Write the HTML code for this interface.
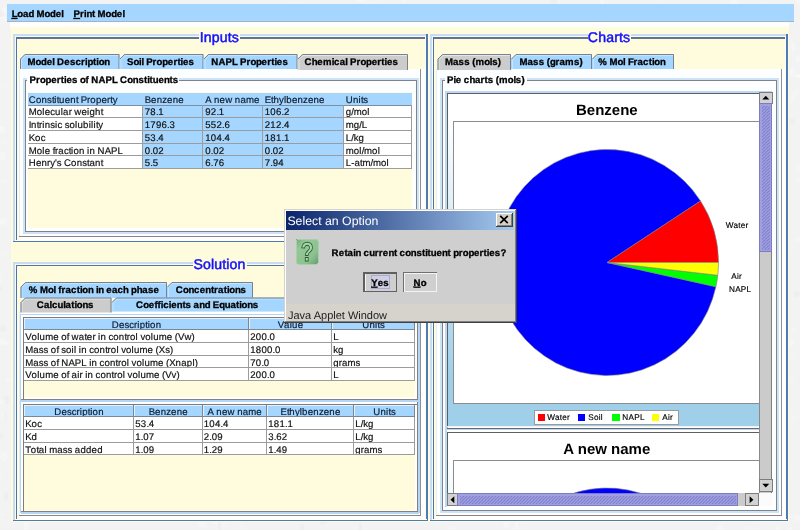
<!DOCTYPE html>
<html lang="en">
<head>
<meta charset="utf-8">
<title>NAPL Model Applet</title>
<style>
html,body{margin:0;padding:0;background:#f3f3f3;}
body{width:800px;height:530px;overflow:hidden;}
svg{display:block;will-change:transform;font-family:"Liberation Sans",Arial,sans-serif;}
svg rect, svg line{shape-rendering:crispEdges;}
svg text{text-rendering:geometricPrecision;}
</style>
</head>
<body>
<svg width="800" height="530" viewBox="0 0 800 530">
<rect x="0" y="0" width="800" height="530" fill="#f3f3f3" />
<ellipse cx="296.0" cy="1.4" rx="3.8" ry="3.1" fill="#fafafa" opacity="0.3"/>
<ellipse cx="376.2" cy="1.4" rx="2.1" ry="2.0" fill="#fafafa" opacity="0.3"/>
<ellipse cx="3.1" cy="401.9" rx="3.0" ry="2.6" fill="#ffffff" opacity="0.3"/>
<ellipse cx="792.7" cy="378.5" rx="3.8" ry="2.9" fill="#fafafa" opacity="0.3"/>
<ellipse cx="3.6" cy="19.0" rx="2.7" ry="2.4" fill="#fafafa" opacity="0.3"/>
<ellipse cx="240.8" cy="526.6" rx="3.0" ry="4.7" fill="#fafafa" opacity="0.3"/>
<ellipse cx="223.7" cy="523.3" rx="3.9" ry="4.7" fill="#fafafa" opacity="0.3"/>
<ellipse cx="506.4" cy="523.0" rx="3.6" ry="5.0" fill="#ffffff" opacity="0.3"/>
<ellipse cx="2.8" cy="155.8" rx="3.4" ry="4.6" fill="#ffffff" opacity="0.3"/>
<ellipse cx="302.2" cy="529.0" rx="2.8" ry="5.0" fill="#e9e9e9" opacity="0.3"/>
<ellipse cx="0.1" cy="514.9" rx="2.2" ry="2.4" fill="#fafafa" opacity="0.3"/>
<ellipse cx="0.3" cy="475.2" rx="2.4" ry="3.1" fill="#fafafa" opacity="0.3"/>
<ellipse cx="3.1" cy="328.7" rx="3.9" ry="3.3" fill="#e9e9e9" opacity="0.3"/>
<ellipse cx="797.2" cy="518.2" rx="2.8" ry="3.4" fill="#ffffff" opacity="0.3"/>
<ellipse cx="799.9" cy="326.4" rx="3.1" ry="1.7" fill="#fafafa" opacity="0.3"/>
<ellipse cx="733.9" cy="2.1" rx="3.0" ry="4.8" fill="#ffffff" opacity="0.3"/>
<ellipse cx="365.0" cy="1.8" rx="2.3" ry="2.8" fill="#fafafa" opacity="0.3"/>
<ellipse cx="2.1" cy="514.8" rx="3.2" ry="2.0" fill="#fafafa" opacity="0.3"/>
<ellipse cx="1.8" cy="359.4" rx="3.1" ry="1.8" fill="#fafafa" opacity="0.3"/>
<ellipse cx="793.3" cy="429.2" rx="3.9" ry="1.8" fill="#fafafa" opacity="0.3"/>
<ellipse cx="5.2" cy="417.1" rx="1.6" ry="4.9" fill="#e9e9e9" opacity="0.3"/>
<ellipse cx="798.4" cy="180.3" rx="3.6" ry="1.8" fill="#fafafa" opacity="0.3"/>
<ellipse cx="791.3" cy="246.3" rx="3.1" ry="2.5" fill="#fafafa" opacity="0.3"/>
<ellipse cx="3.3" cy="253.0" rx="3.6" ry="3.7" fill="#fafafa" opacity="0.3"/>
<ellipse cx="3.5" cy="17.1" rx="2.6" ry="4.1" fill="#fafafa" opacity="0.3"/>
<ellipse cx="4.2" cy="456.6" rx="3.6" ry="4.9" fill="#ffffff" opacity="0.3"/>
<ellipse cx="722.9" cy="523.6" rx="2.9" ry="1.5" fill="#fafafa" opacity="0.3"/>
<ellipse cx="1.0" cy="278.2" rx="2.5" ry="4.8" fill="#fafafa" opacity="0.3"/>
<ellipse cx="777.6" cy="528.3" rx="2.1" ry="1.9" fill="#ffffff" opacity="0.3"/>
<ellipse cx="1.4" cy="436.5" rx="1.5" ry="3.7" fill="#e9e9e9" opacity="0.3"/>
<ellipse cx="214.9" cy="522.4" rx="3.4" ry="1.5" fill="#ffffff" opacity="0.3"/>
<ellipse cx="790.5" cy="516.6" rx="3.6" ry="1.8" fill="#fafafa" opacity="0.3"/>
<ellipse cx="791.6" cy="342.9" rx="3.0" ry="2.8" fill="#ffffff" opacity="0.3"/>
<ellipse cx="7.9" cy="379.5" rx="2.5" ry="1.8" fill="#ffffff" opacity="0.3"/>
<ellipse cx="520.2" cy="528.4" rx="1.6" ry="3.7" fill="#fafafa" opacity="0.3"/>
<ellipse cx="2.5" cy="129.9" rx="2.8" ry="3.9" fill="#ffffff" opacity="0.3"/>
<ellipse cx="6.4" cy="496.3" rx="2.4" ry="4.6" fill="#e9e9e9" opacity="0.3"/>
<ellipse cx="751.2" cy="529.1" rx="3.2" ry="4.1" fill="#fafafa" opacity="0.3"/>
<ellipse cx="798.1" cy="76.1" rx="3.4" ry="1.7" fill="#ffffff" opacity="0.3"/>
<ellipse cx="4.5" cy="181.0" rx="3.6" ry="1.6" fill="#ffffff" opacity="0.3"/>
<ellipse cx="761.9" cy="0.9" rx="1.8" ry="4.1" fill="#fafafa" opacity="0.3"/>
<ellipse cx="0.5" cy="128.3" rx="1.9" ry="2.4" fill="#fafafa" opacity="0.3"/>
<ellipse cx="202.3" cy="524.8" rx="3.9" ry="2.8" fill="#ffffff" opacity="0.3"/>
<ellipse cx="7.8" cy="220.1" rx="2.9" ry="3.5" fill="#fafafa" opacity="0.3"/>
<ellipse cx="5.5" cy="86.2" rx="2.7" ry="3.2" fill="#fafafa" opacity="0.3"/>
<ellipse cx="4.1" cy="72.2" rx="3.4" ry="2.0" fill="#fafafa" opacity="0.3"/>
<ellipse cx="792.3" cy="355.8" rx="3.6" ry="3.6" fill="#fafafa" opacity="0.3"/>
<ellipse cx="4.7" cy="142.1" rx="3.5" ry="2.2" fill="#fafafa" opacity="0.3"/>
<ellipse cx="2.9" cy="221.8" rx="3.2" ry="4.0" fill="#ffffff" opacity="0.3"/>
<ellipse cx="657.3" cy="0.1" rx="3.6" ry="2.9" fill="#fafafa" opacity="0.3"/>
<ellipse cx="7.1" cy="343.6" rx="3.4" ry="1.7" fill="#ffffff" opacity="0.3"/>
<ellipse cx="792.4" cy="72.9" rx="3.1" ry="3.9" fill="#ffffff" opacity="0.3"/>
<ellipse cx="792.6" cy="97.1" rx="1.7" ry="4.3" fill="#ffffff" opacity="0.3"/>
<ellipse cx="798.3" cy="239.7" rx="3.3" ry="2.7" fill="#ffffff" opacity="0.3"/>
<ellipse cx="2.7" cy="341.5" rx="3.4" ry="3.2" fill="#ffffff" opacity="0.3"/>
<ellipse cx="219.8" cy="525.5" rx="1.7" ry="4.8" fill="#e9e9e9" opacity="0.3"/>
<ellipse cx="360.3" cy="527.2" rx="1.8" ry="4.8" fill="#e9e9e9" opacity="0.3"/>
<ellipse cx="795.4" cy="269.6" rx="1.6" ry="2.5" fill="#fafafa" opacity="0.3"/>
<ellipse cx="516.5" cy="525.0" rx="1.8" ry="4.8" fill="#ffffff" opacity="0.3"/>
<ellipse cx="796.4" cy="294.1" rx="3.1" ry="3.1" fill="#e9e9e9" opacity="0.3"/>
<ellipse cx="6.3" cy="399.9" rx="2.9" ry="4.1" fill="#e9e9e9" opacity="0.3"/>
<ellipse cx="0.8" cy="22.3" rx="2.8" ry="2.4" fill="#fafafa" opacity="0.3"/>
<ellipse cx="322.7" cy="522.6" rx="3.6" ry="1.9" fill="#e9e9e9" opacity="0.3"/>
<ellipse cx="451.5" cy="527.6" rx="3.2" ry="2.9" fill="#fafafa" opacity="0.3"/>
<ellipse cx="1.0" cy="288.7" rx="1.9" ry="2.1" fill="#e9e9e9" opacity="0.3"/>
<ellipse cx="792.9" cy="472.3" rx="3.9" ry="2.8" fill="#fafafa" opacity="0.3"/>
<ellipse cx="398.3" cy="524.4" rx="1.6" ry="2.2" fill="#fafafa" opacity="0.3"/>
<ellipse cx="797.7" cy="91.7" rx="3.1" ry="2.2" fill="#fafafa" opacity="0.3"/>
<ellipse cx="798.1" cy="59.1" rx="2.2" ry="3.8" fill="#ffffff" opacity="0.3"/>
<ellipse cx="1.1" cy="13.5" rx="3.0" ry="3.3" fill="#e9e9e9" opacity="0.3"/>
<ellipse cx="799.3" cy="368.2" rx="1.8" ry="4.5" fill="#fafafa" opacity="0.3"/>
<ellipse cx="790.3" cy="528.9" rx="2.0" ry="1.7" fill="#ffffff" opacity="0.3"/>
<ellipse cx="3.5" cy="417.1" rx="2.5" ry="4.5" fill="#fafafa" opacity="0.3"/>
<ellipse cx="559.4" cy="523.7" rx="2.3" ry="3.1" fill="#fafafa" opacity="0.3"/>
<ellipse cx="719.5" cy="528.8" rx="2.8" ry="3.6" fill="#ffffff" opacity="0.3"/>
<ellipse cx="798.0" cy="76.0" rx="2.6" ry="2.2" fill="#ffffff" opacity="0.3"/>
<ellipse cx="402.9" cy="0.1" rx="2.6" ry="2.1" fill="#ffffff" opacity="0.3"/>
<ellipse cx="26.3" cy="525.2" rx="2.7" ry="4.7" fill="#ffffff" opacity="0.3"/>
<ellipse cx="793.9" cy="329.9" rx="2.4" ry="1.9" fill="#ffffff" opacity="0.3"/>
<ellipse cx="792.9" cy="418.3" rx="3.9" ry="3.2" fill="#fafafa" opacity="0.3"/>
<ellipse cx="798.1" cy="168.0" rx="1.6" ry="3.0" fill="#ffffff" opacity="0.3"/>
<ellipse cx="4.7" cy="10.1" rx="2.8" ry="3.2" fill="#ffffff" opacity="0.3"/>
<ellipse cx="799.0" cy="180.2" rx="2.7" ry="2.7" fill="#fafafa" opacity="0.3"/>
<ellipse cx="793.0" cy="46.5" rx="2.2" ry="4.5" fill="#ffffff" opacity="0.3"/>
<ellipse cx="795.5" cy="92.6" rx="3.3" ry="4.1" fill="#fafafa" opacity="0.3"/>
<ellipse cx="791.8" cy="121.6" rx="3.4" ry="3.2" fill="#e9e9e9" opacity="0.3"/>
<ellipse cx="602.2" cy="2.1" rx="1.9" ry="4.0" fill="#ffffff" opacity="0.3"/>
<ellipse cx="553.5" cy="0.3" rx="3.7" ry="4.6" fill="#e9e9e9" opacity="0.3"/>
<ellipse cx="798.7" cy="0.9" rx="2.0" ry="4.3" fill="#ffffff" opacity="0.3"/>
<ellipse cx="360.3" cy="0.6" rx="3.8" ry="2.0" fill="#ffffff" opacity="0.3"/>
<rect x="7" y="4" width="787" height="18.3" fill="#a4d6ff" />
<rect x="7" y="21.3" width="787" height="1" fill="#a3b5c3" />
<text x="11.70 17.30 22.90 28.50 34.10 36.50 44.50 50.10 55.70 61.30" y="17" font-size="9.60" font-weight="bold" fill="#000"  stroke="#000" stroke-width="0.3"><tspan text-decoration="underline">L</tspan>oad Model</text>
<text x="73.60 80.00 84.00 86.40 92.00 95.20 97.60 105.60 111.20 116.80 122.40" y="17" font-size="9.60" font-weight="bold" fill="#000"  stroke="#000" stroke-width="0.3"><tspan text-decoration="underline">P</tspan>rint Model</text>
<defs><linearGradient id="cg" x1="0" y1="0" x2="0" y2="1"><stop offset="0" stop-color="#ffffff"/><stop offset="1" stop-color="#fffbdd"/></linearGradient>
<linearGradient id="tg" x1="0" y1="0" x2="1" y2="0"><stop offset="0" stop-color="#0a246a"/><stop offset="1" stop-color="#a6caf0"/></linearGradient>
<linearGradient id="ig" x1="0" y1="0" x2="1" y2="1"><stop offset="0" stop-color="#6fa878"/><stop offset="0.25" stop-color="#93c896"/><stop offset="0.7" stop-color="#8cc290"/><stop offset="1" stop-color="#5f9a70"/></linearGradient>
<pattern id="hatch" width="3.2" height="3.2" patternUnits="userSpaceOnUse"><rect width="3.2" height="3.2" fill="#a6a6e6"/><path d="M-0.8,0.8 L0.8,-0.8 M0,3.2 L3.2,0 M2.4,4 L4,2.4" stroke="#7a7ac8" stroke-width="1.0"/></pattern>
<clipPath id="clip1"><rect x="447" y="93" width="312" height="334.5"/></clipPath>
<clipPath id="clip2"><rect x="447" y="431" width="312" height="62"/></clipPath>
<linearGradient id="chg" x1="0" y1="0" x2="0" y2="1"><stop offset="0" stop-color="#ffffff"/><stop offset="0.08" stop-color="#ffffff"/><stop offset="0.85" stop-color="#9fcfe9"/><stop offset="1" stop-color="#9fcfe9"/></linearGradient>
</defs>
<rect x="10.6" y="22" width="778.6" height="500.3" fill="#fffbdd" />
<rect x="10" y="22" width="779" height="3.5" fill="#ffffff" />
<rect x="10" y="25.5" width="779" height="3" fill="url(#cg)" />
<rect x="13" y="34" width="414.5" height="2" fill="#c8dcf4" />
<rect x="15" y="36" width="411.5" height="1" fill="#f4faff" />
<rect x="16" y="37" width="409.5" height="1.7" fill="#61738e" />
<rect x="13" y="34" width="2" height="208.4" fill="#c8dcf4" />
<rect x="15" y="36" width="1" height="205.4" fill="#f4faff" />
<rect x="15.8" y="37" width="1.5" height="203.4" fill="#4f72a6" />
<rect x="424.7" y="36" width="1.2" height="205.4" fill="#fafdff" />
<rect x="425.9" y="34" width="1.6" height="208.4" fill="#4f7bb0" />
<rect x="15" y="239.6" width="411.5" height="1.2" fill="#fafdff" />
<rect x="13" y="240.8" width="414.5" height="1.6" fill="#4f7bb0" />
<rect x="198.5" y="32" width="41.5" height="9" fill="#fffbdd" />
<text x="199.70 203.70 211.70 219.70 227.70 231.70" y="41.9" font-size="14.08" font-weight="normal" fill="#1212ff" stroke="#1212ff" stroke-width="0.5">Inputs</text>
<rect x="430" y="34" width="357.5" height="2" fill="#c8dcf4" />
<rect x="432" y="36" width="354.5" height="1" fill="#f4faff" />
<rect x="433" y="37" width="352.5" height="1.7" fill="#61738e" />
<rect x="430" y="34" width="2" height="487.4" fill="#c8dcf4" />
<rect x="432" y="36" width="1" height="484.4" fill="#f4faff" />
<rect x="432.8" y="37" width="1.5" height="482.4" fill="#4f72a6" />
<rect x="784.7" y="36" width="1.2" height="484.4" fill="#fafdff" />
<rect x="785.9" y="34" width="1.6" height="487.4" fill="#4f7bb0" />
<rect x="432" y="518.6" width="354.5" height="1.2" fill="#fafdff" />
<rect x="430" y="519.8" width="357.5" height="1.6" fill="#4f7bb0" />
<rect x="587.5" y="32" width="43.5" height="9" fill="#fffbdd" />
<text x="587.80 598.20 606.20 614.20 619.00 623.00" y="41.9" font-size="14.08" font-weight="normal" fill="#1212ff" stroke="#1212ff" stroke-width="0.5">Charts</text>
<rect x="13" y="261.5" width="414.5" height="2" fill="#c8dcf4" />
<rect x="15" y="263.5" width="411.5" height="1" fill="#f4faff" />
<rect x="16" y="264.5" width="409.5" height="1.7" fill="#61738e" />
<rect x="13" y="261.5" width="2" height="259.9" fill="#c8dcf4" />
<rect x="15" y="263.5" width="1" height="256.9" fill="#f4faff" />
<rect x="15.8" y="264.5" width="1.5" height="254.89999999999998" fill="#4f72a6" />
<rect x="424.7" y="263.5" width="1.2" height="256.9" fill="#fafdff" />
<rect x="425.9" y="261.5" width="1.6" height="259.9" fill="#4f7bb0" />
<rect x="15" y="518.6" width="411.5" height="1.2" fill="#fafdff" />
<rect x="13" y="519.8" width="414.5" height="1.6" fill="#4f7bb0" />
<rect x="192.5" y="259.5" width="54.0" height="9" fill="#fffbdd" />
<text x="193.40 203.00 211.00 214.20 222.20 226.20 229.40 237.40" y="269.3" font-size="14.08" font-weight="normal" fill="#1212ff" stroke="#1212ff" stroke-width="0.5">Solution</text>
<rect x="19" y="69" width="405.7" height="171.8" fill="#ffffff" />
<rect x="19" y="69" width="402" height="168" fill="#fdfeff" />
<rect x="19" y="69" width="402" height="1" fill="#ffffff" />
<rect x="19" y="69" width="1" height="168" fill="#e6eef8" />
<rect x="420" y="69" width="1" height="168" fill="#8b8f96" />
<rect x="19" y="236" width="402" height="1" fill="#8b8680" />
<polygon points="20,69 20,59 25,54 119.5,54 119.5,69" fill="#a4d6ff"/>
<polyline points="21.5,69 21.5,59.5 25.5,55.5 118.5,55.5" fill="none" stroke="#c6e4ff" stroke-width="1"/>
<polyline points="20.5,69 20.5,59 25,54.5 119.0,54.5 119.0,69" fill="none" stroke="#76828f" stroke-width="1"/>
<text x="27.50 35.50 41.10 46.70 52.30 54.70 57.10 64.30 69.90 75.50 81.10 85.10 87.50 93.10 96.30 98.70 104.30" y="64.9" font-size="9.60" font-weight="bold" fill="#000"  stroke="#000" stroke-width="0.3">Model Description</text>
<polygon points="119.5,69 119.5,59 124.5,54 203.5,54 203.5,69" fill="#a4d6ff"/>
<polyline points="121.0,69 121.0,59.5 125.0,55.5 202.5,55.5" fill="none" stroke="#c6e4ff" stroke-width="1"/>
<polyline points="120.0,59 124.5,54.5 203.0,54.5 203.0,69" fill="none" stroke="#76828f" stroke-width="1"/>
<text x="127.00 133.40 139.00 141.40 143.80 146.20 152.60 156.60 162.20 167.80 173.40 177.40 180.60 183.00 188.60" y="64.9" font-size="9.60" font-weight="bold" fill="#000"  stroke="#000" stroke-width="0.3">Soil Properties</text>
<polygon points="203.5,69 203.5,59 208.5,54 297.5,54 297.5,69" fill="#a4d6ff"/>
<polyline points="205.0,69 205.0,59.5 209.0,55.5 296.5,55.5" fill="none" stroke="#c6e4ff" stroke-width="1"/>
<polyline points="204.0,59 208.5,54.5 297.0,54.5 297.0,69" fill="none" stroke="#76828f" stroke-width="1"/>
<text x="211.20 218.40 225.60 232.00 237.60 240.00 246.40 250.40 256.00 261.60 267.20 271.20 274.40 276.80 282.40" y="64.9" font-size="9.60" font-weight="bold" fill="#000"  stroke="#000" stroke-width="0.3">NAPL Properties</text>
<polygon points="297.5,70 297.5,59 302.5,54 408,54 408,70" fill="#cccccc"/>
<polyline points="299.0,70 299.0,59.5 303.0,55.5 407,55.5" fill="none" stroke="#e6e6e6" stroke-width="1"/>
<polyline points="298.0,59 302.5,54.5 407.5,54.5 407.5,70" fill="none" stroke="#76828f" stroke-width="1"/>
<text x="304.50 311.70 317.30 322.90 331.70 334.10 339.70 345.30 347.70 350.10 356.50 360.50 366.10 371.70 377.30 381.30 384.50 386.90 392.50" y="64.9" font-size="9.60" font-weight="bold" fill="#000"  stroke="#000" stroke-width="0.3">Chemical Properties</text>
<rect x="436" y="69" width="349.90000000000003" height="450.8" fill="#ffffff" />
<rect x="436" y="69" width="345.6" height="447" fill="#fdfeff" />
<rect x="436" y="69" width="345.6" height="1" fill="#ffffff" />
<rect x="436" y="69" width="1" height="447" fill="#e6eef8" />
<rect x="780.6" y="69" width="1" height="447" fill="#8b8f96" />
<rect x="436" y="515" width="345.6" height="1" fill="#8b8680" />
<polygon points="437.5,70 437.5,59 442.5,54 511,54 511,70" fill="#cccccc"/>
<polyline points="439.0,70 439.0,59.5 443.0,55.5 510,55.5" fill="none" stroke="#e6e6e6" stroke-width="1"/>
<polyline points="438.0,70 438.0,59 442.5,54.5 510.5,54.5 510.5,70" fill="none" stroke="#76828f" stroke-width="1"/>
<text x="445.00 453.00 458.60 464.20 469.80 472.20 475.40 484.20 489.80 492.20 497.80" y="64.9" font-size="9.60" font-weight="bold" fill="#000"  stroke="#000" stroke-width="0.3">Mass (mols)</text>
<polygon points="511,69 511,59 516,54 592,54 592,69" fill="#a4d6ff"/>
<polyline points="512.5,69 512.5,59.5 516.5,55.5 591,55.5" fill="none" stroke="#c6e4ff" stroke-width="1"/>
<polyline points="511.5,59 516,54.5 591.5,54.5 591.5,69" fill="none" stroke="#76828f" stroke-width="1"/>
<text x="519.50 527.50 533.10 538.70 544.30 546.70 549.90 555.50 559.50 565.10 573.90 579.50" y="64.9" font-size="9.60" font-weight="bold" fill="#000"  stroke="#000" stroke-width="0.3">Mass (grams)</text>
<polygon points="592,69 592,59 597,54 674,54 674,69" fill="#a4d6ff"/>
<polyline points="593.5,69 593.5,59.5 597.5,55.5 673,55.5" fill="none" stroke="#c6e4ff" stroke-width="1"/>
<polyline points="592.5,59 597,54.5 673.5,54.5 673.5,69" fill="none" stroke="#76828f" stroke-width="1"/>
<text x="598.30 607.10 609.50 617.50 623.10 625.50 627.90 633.50 637.50 643.10 648.70 651.90 654.30 659.90" y="64.9" font-size="9.60" font-weight="bold" fill="#000"  stroke="#000" stroke-width="0.3">% Mol Fraction</text>
<rect x="19" y="311.5" width="405.7" height="208.3" fill="#ffffff" />
<rect x="19" y="311.5" width="402.3" height="204.5" fill="#fdfeff" />
<rect x="19" y="311.5" width="402.3" height="1" fill="#ffffff" />
<rect x="19" y="311.5" width="1" height="204.5" fill="#e6eef8" />
<rect x="420.3" y="311.5" width="1" height="204.5" fill="#8b8f96" />
<rect x="19" y="515" width="402.3" height="1" fill="#8b8680" />
<polygon points="20.5,298 20.5,287 25.5,282 167,282 167,298" fill="#a4d6ff"/>
<polyline points="22.0,298 22.0,287.5 26.0,283.5 166,283.5" fill="none" stroke="#c6e4ff" stroke-width="1"/>
<polyline points="21.0,298 21.0,287 25.5,282.5 166.5,282.5 166.5,298" fill="none" stroke="#76828f" stroke-width="1"/>
<text x="28.70 37.50 39.90 47.90 53.50 55.90 58.30 61.50 65.50 71.10 76.70 79.90 82.30 87.90 93.50 95.90 98.30 103.90 106.30 111.90 117.50 123.10 128.70 131.10 136.70 142.30 147.90 153.50" y="292.9" font-size="9.60" font-weight="bold" fill="#000"  stroke="#000" stroke-width="0.3">% Mol fraction in each phase</text>
<polygon points="167,298 167,287 172,282 253,282 253,298" fill="#a4d6ff"/>
<polyline points="168.5,298 168.5,287.5 172.5,283.5 252,283.5" fill="none" stroke="#c6e4ff" stroke-width="1"/>
<polyline points="167.5,287 172,282.5 252.5,282.5 252.5,298" fill="none" stroke="#76828f" stroke-width="1"/>
<text x="175.70 182.90 188.50 194.10 199.70 205.30 210.90 214.10 218.10 223.70 226.90 229.30 234.90 240.50" y="292.9" font-size="9.60" font-weight="bold" fill="#000"  stroke="#000" stroke-width="0.3">Concentrations</text>
<polygon points="111.5,311.5 111.5,302.5 116.5,297.5 300,297.5 300,311.5" fill="#a4d6ff"/>
<polyline points="113.0,311.5 113.0,303.0 117.0,299.0 299,299.0" fill="none" stroke="#c6e4ff" stroke-width="1"/>
<polyline points="112.0,302.5 116.5,298.0 299.5,298.0 299.5,311.5" fill="none" stroke="#76828f" stroke-width="1"/>
<text x="136.00 143.20 148.80 154.40 157.60 160.80 163.20 168.80 171.20 176.80 182.40 185.60 191.20 193.60 199.20 204.80 210.40 212.80 219.20 224.80 230.40 236.00 239.20 241.60 247.20 252.80" y="308.4" font-size="9.60" font-weight="bold" fill="#000"  stroke="#000" stroke-width="0.3">Coefficients and Equations</text>
<polygon points="20.5,312.5 20.5,302.5 25.5,297.5 111.5,297.5 111.5,312.5" fill="#cccccc"/>
<polyline points="22.0,312.5 22.0,303.0 26.0,299.0 110.5,299.0" fill="none" stroke="#e6e6e6" stroke-width="1"/>
<polyline points="21.0,312.5 21.0,302.5 25.5,298.0 111.0,298.0 111.0,312.5" fill="none" stroke="#76828f" stroke-width="1"/>
<text x="36.80 44.00 49.60 52.00 57.60 63.20 65.60 71.20 74.40 76.80 82.40 88.00" y="308.4" font-size="9.60" font-weight="bold" fill="#000"  stroke="#000" stroke-width="0.3">Calculations</text>
<rect x="24.0" y="79.0" width="393.5" height="154.0" fill="none" stroke="#cfe3f7" stroke-width="2"/>
<rect x="25.5" y="80.5" width="390.5" height="151.0" fill="none" stroke="#7d8389" stroke-width="1"/>
<rect x="27.1" y="76.5" width="151.9" height="8" fill="#fdfeff" />
<text x="29.60 36.00 40.00 45.60 51.20 56.80 60.80 64.00 66.40 72.00 77.60 80.00 85.60 88.80 91.20 98.40 105.60 112.00 117.60 120.00 127.20 132.80 138.40 144.00 147.20 149.60 152.80 158.40 164.00 169.60 172.80" y="82.9" font-size="9.60" font-weight="bold" fill="#000"  stroke="#000" stroke-width="0.3">Properties of NAPL Constituents</text>
<rect x="441.0" y="79.0" width="337.0" height="433.0" fill="none" stroke="#cfe3f7" stroke-width="2"/>
<rect x="442.5" y="80.5" width="334.0" height="430.0" fill="none" stroke="#7d8389" stroke-width="1"/>
<rect x="444.5" y="76.5" width="82.5" height="8" fill="#fdfeff" />
<text x="447.00 453.40 455.80 461.40 463.80 469.40 475.00 480.60 484.60 487.80 493.40 495.80 499.00 507.80 513.40 515.80 521.40" y="82.9" font-size="9.60" font-weight="bold" fill="#000"  stroke="#000" stroke-width="0.3">Pie charts (mols)</text>
<rect x="28" y="92" width="384" height="136" fill="#fffbdd" />
<rect x="28" y="92.5" width="383.5" height="12.5" fill="#a4d6ff" />
<text x="28.70 35.90 41.50 47.10 51.90 54.30 56.70 59.10 64.70 70.30 75.90 78.30 80.70 87.10 90.30 95.90 101.50 107.10 110.30 112.70" y="102.6" font-size="9.60" font-weight="normal" fill="#0c1c30"  stroke="#0c1c30" stroke-width="0.18">Constituent Property</text>
<text x="144.70 151.10 156.70 162.30 167.10 172.70 178.30" y="102.6" font-size="9.60" font-weight="normal" fill="#0c1c30"  stroke="#0c1c30" stroke-width="0.18">Benzene</text>
<text x="205.20 211.60 214.00 219.60 225.20 232.40 234.80 240.40 246.00 254.00" y="102.6" font-size="9.60" font-weight="normal" fill="#0c1c30"  stroke="#0c1c30" stroke-width="0.18">A new name</text>
<text x="264.70 271.10 273.50 279.10 283.90 286.30 291.90 297.50 303.10 307.90 313.50 319.10" y="102.6" font-size="9.60" font-weight="normal" fill="#0c1c30"  stroke="#0c1c30" stroke-width="0.18">Ethylbenzene</text>
<text x="345.70 352.90 358.50 360.90 363.30" y="102.6" font-size="9.60" font-weight="normal" fill="#0c1c30"  stroke="#0c1c30" stroke-width="0.18">Units</text>
<rect x="28" y="105" width="114.5" height="12.8" fill="#ffffff" />
<rect x="142.5" y="105" width="201.0" height="12.8" fill="#a4d6ff" />
<rect x="343.5" y="105" width="68.0" height="12.8" fill="#ffffff" />
<text x="28.70 36.70 42.30 44.70 50.30 55.10 60.70 63.10 68.70 71.90 74.30 81.50 87.10 89.50 95.10 100.70" y="115.1" font-size="9.60" font-weight="normal" fill="#111"  stroke="#111" stroke-width="0.18">Molecular weight</text>
<text x="144.70 150.30 155.90 158.30" y="115.1" font-size="9.60" font-weight="normal" fill="#111"  stroke="#111" stroke-width="0.18">78.1</text>
<text x="205.20 210.80 216.40 218.80" y="115.1" font-size="9.60" font-weight="normal" fill="#111"  stroke="#111" stroke-width="0.18">92.1</text>
<text x="264.70 270.30 275.90 281.50 283.90" y="115.1" font-size="9.60" font-weight="normal" fill="#111"  stroke="#111" stroke-width="0.18">106.2</text>
<text x="345.70 351.30 353.70 361.70 367.30" y="115.1" font-size="9.60" font-weight="normal" fill="#111"  stroke="#111" stroke-width="0.18">g/mol</text>
<rect x="28" y="117.8" width="114.5" height="12.8" fill="#ffffff" />
<rect x="142.5" y="117.8" width="201.0" height="12.8" fill="#a4d6ff" />
<rect x="343.5" y="117.8" width="68.0" height="12.8" fill="#ffffff" />
<text x="28.70 31.10 36.70 39.10 42.30 44.70 50.30 55.10 57.50 62.30 64.70 69.50 75.10 77.50 83.10 88.70 91.10 93.50 95.90 98.30" y="127.89999999999999" font-size="9.60" font-weight="normal" fill="#111"  stroke="#111" stroke-width="0.18">Intrinsic solubility</text>
<text x="144.70 150.30 155.90 161.50 167.10 169.50" y="127.89999999999999" font-size="9.60" font-weight="normal" fill="#111"  stroke="#111" stroke-width="0.18">1796.3</text>
<text x="205.20 210.80 216.40 222.00 224.40" y="127.89999999999999" font-size="9.60" font-weight="normal" fill="#111"  stroke="#111" stroke-width="0.18">552.6</text>
<text x="264.70 270.30 275.90 281.50 283.90" y="127.89999999999999" font-size="9.60" font-weight="normal" fill="#111"  stroke="#111" stroke-width="0.18">212.4</text>
<text x="345.70 353.70 359.30 361.70" y="127.89999999999999" font-size="9.60" font-weight="normal" fill="#111"  stroke="#111" stroke-width="0.18">mg/L</text>
<rect x="28" y="130.6" width="114.5" height="12.8" fill="#ffffff" />
<rect x="142.5" y="130.6" width="201.0" height="12.8" fill="#a4d6ff" />
<rect x="343.5" y="130.6" width="68.0" height="12.8" fill="#ffffff" />
<text x="28.70 35.10 40.70" y="140.7" font-size="9.60" font-weight="normal" fill="#111"  stroke="#111" stroke-width="0.18">Koc</text>
<text x="144.70 150.30 155.90 158.30" y="140.7" font-size="9.60" font-weight="normal" fill="#111"  stroke="#111" stroke-width="0.18">53.4</text>
<text x="205.20 210.80 216.40 222.00 224.40" y="140.7" font-size="9.60" font-weight="normal" fill="#111"  stroke="#111" stroke-width="0.18">104.4</text>
<text x="264.70 270.30 275.90 281.50 283.90" y="140.7" font-size="9.60" font-weight="normal" fill="#111"  stroke="#111" stroke-width="0.18">181.1</text>
<text x="345.70 351.30 353.70 358.50" y="140.7" font-size="9.60" font-weight="normal" fill="#111"  stroke="#111" stroke-width="0.18">L/kg</text>
<rect x="28" y="143.4" width="114.5" height="12.8" fill="#ffffff" />
<rect x="142.5" y="143.4" width="201.0" height="12.8" fill="#a4d6ff" />
<rect x="343.5" y="143.4" width="68.0" height="12.8" fill="#ffffff" />
<text x="28.70 36.70 42.30 44.70 50.30 52.70 55.10 58.30 63.90 68.70 71.10 73.50 79.10 84.70 87.10 89.50 95.10 97.50 104.70 111.10 117.50" y="153.5" font-size="9.60" font-weight="normal" fill="#111"  stroke="#111" stroke-width="0.18">Mole fraction in NAPL</text>
<text x="144.70 150.30 152.70 158.30" y="153.5" font-size="9.60" font-weight="normal" fill="#111"  stroke="#111" stroke-width="0.18">0.02</text>
<text x="205.20 210.80 213.20 218.80" y="153.5" font-size="9.60" font-weight="normal" fill="#111"  stroke="#111" stroke-width="0.18">0.02</text>
<text x="264.70 270.30 272.70 278.30" y="153.5" font-size="9.60" font-weight="normal" fill="#111"  stroke="#111" stroke-width="0.18">0.02</text>
<text x="345.70 353.70 359.30 361.70 364.10 372.10 377.70" y="153.5" font-size="9.60" font-weight="normal" fill="#111"  stroke="#111" stroke-width="0.18">mol/mol</text>
<rect x="28" y="156.20000000000002" width="114.5" height="12.8" fill="#ffffff" />
<rect x="142.5" y="156.20000000000002" width="201.0" height="12.8" fill="#a4d6ff" />
<rect x="343.5" y="156.20000000000002" width="68.0" height="12.8" fill="#ffffff" />
<text x="28.70 35.90 41.50 47.10 50.30 55.10 56.70 61.50 63.90 71.10 76.70 82.30 87.10 89.50 95.10 100.70" y="166.3" font-size="9.60" font-weight="normal" fill="#111"  stroke="#111" stroke-width="0.18">Henry's Constant</text>
<text x="144.70 150.30 152.70" y="166.3" font-size="9.60" font-weight="normal" fill="#111"  stroke="#111" stroke-width="0.18">5.5</text>
<text x="205.20 210.80 213.20 218.80" y="166.3" font-size="9.60" font-weight="normal" fill="#111"  stroke="#111" stroke-width="0.18">6.76</text>
<text x="264.70 270.30 272.70 278.30" y="166.3" font-size="9.60" font-weight="normal" fill="#111"  stroke="#111" stroke-width="0.18">7.94</text>
<text x="345.70 351.30 354.50 360.10 362.50 370.50 372.90 380.90 386.50" y="166.3" font-size="9.60" font-weight="normal" fill="#111"  stroke="#111" stroke-width="0.18">L-atm/mol</text>
<line x1="28" y1="105" x2="411.5" y2="105" stroke="#7f8ea0" stroke-width="1" />
<line x1="28" y1="117.39999999999999" x2="411.5" y2="117.39999999999999" stroke="#9c9c9c" stroke-width="1" />
<line x1="28" y1="130.2" x2="411.5" y2="130.2" stroke="#9c9c9c" stroke-width="1" />
<line x1="28" y1="143.0" x2="411.5" y2="143.0" stroke="#9c9c9c" stroke-width="1" />
<line x1="28" y1="155.8" x2="411.5" y2="155.8" stroke="#9c9c9c" stroke-width="1" />
<line x1="28" y1="168.60000000000002" x2="411.5" y2="168.60000000000002" stroke="#9c9c9c" stroke-width="1" />
<line x1="142.0" y1="105" x2="142.0" y2="169" stroke="#9c9c9c" stroke-width="1" />
<line x1="202.5" y1="105" x2="202.5" y2="169" stroke="#9c9c9c" stroke-width="1" />
<line x1="262.0" y1="105" x2="262.0" y2="169" stroke="#9c9c9c" stroke-width="1" />
<line x1="343.0" y1="105" x2="343.0" y2="169" stroke="#9c9c9c" stroke-width="1" />
<line x1="411.0" y1="105" x2="411.0" y2="169" stroke="#9c9c9c" stroke-width="1" />
<rect x="20" y="313.5" width="399.5" height="1" fill="#b4d6f6" />
<rect x="20" y="313.5" width="1" height="199" fill="#b4d6f6" />
<rect x="417" y="314" width="1" height="198" fill="#8a807a" />
<rect x="418" y="314" width="1.5" height="199" fill="#b4d6f6" />
<rect x="21" y="399" width="397" height="1" fill="#8a807a" />
<rect x="21" y="400" width="398" height="1.6" fill="#b4d6f6" />
<rect x="21" y="511.3" width="397" height="1" fill="#8a807a" />
<rect x="21" y="512.3" width="398" height="1.3" fill="#b4d6f6" />
<rect x="23" y="317" width="394" height="81.80000000000001" fill="#fffbdd" />
<rect x="23" y="317" width="394" height="1" fill="#837a76" />
<rect x="23" y="317" width="1" height="81.80000000000001" fill="#837a76" />
<rect x="24" y="397.3" width="393" height="1.5" fill="#ffffff" />
<rect x="415" y="318" width="2" height="80.80000000000001" fill="#ffffff" />
<rect x="24" y="318" width="391" height="12" fill="#a4d6ff" />
<rect x="24" y="318" width="1" height="12" fill="#e4f2ff" />
<rect x="24" y="318" width="225" height="1" fill="#e4f2ff" />
<rect x="248" y="318" width="1" height="12" fill="#7c8792" />
<text x="111.70 118.90 124.50 129.30 134.10 137.30 139.70 145.30 147.70 150.10 155.70" y="328.1" font-size="9.60" font-weight="normal" fill="#0c1c30"  stroke="#0c1c30" stroke-width="0.18">Description</text>
<rect x="249" y="318" width="1" height="12" fill="#e4f2ff" />
<rect x="249" y="318" width="83" height="1" fill="#e4f2ff" />
<rect x="331" y="318" width="1" height="12" fill="#7c8792" />
<text x="277.70 284.10 289.70 292.10 297.70" y="328.1" font-size="9.60" font-weight="normal" fill="#0c1c30"  stroke="#0c1c30" stroke-width="0.18">Value</text>
<rect x="332" y="318" width="1" height="12" fill="#e4f2ff" />
<rect x="332" y="318" width="83" height="1" fill="#e4f2ff" />
<rect x="414" y="318" width="1" height="12" fill="#7c8792" />
<text x="362.30 369.50 375.10 377.50 379.90" y="328.1" font-size="9.60" font-weight="normal" fill="#0c1c30"  stroke="#0c1c30" stroke-width="0.18">Units</text>
<rect x="24" y="329" width="391" height="1" fill="#7c8792" />
<rect x="24" y="330" width="391" height="51.2" fill="#ffffff" />
<text x="25.20 31.60 37.20 39.60 45.20 53.20 58.80 61.20 66.80 69.20 71.60 78.80 84.40 86.80 92.40 95.60 98.00 100.40 106.00 108.40 113.20 118.80 124.40 126.80 130.00 135.60 138.00 140.40 145.20 150.80 153.20 158.80 166.80 172.40 174.80 178.00 184.40 191.60" y="340.0" font-size="9.60" font-weight="normal" fill="#111"  stroke="#111" stroke-width="0.18">Volume of water in control volume (Vw)</text>
<text x="250.20 255.80 261.40 267.00 269.40" y="340.0" font-size="9.60" font-weight="normal" fill="#111"  stroke="#111" stroke-width="0.18">200.0</text>
<text x="333.20" y="340.0" font-size="9.60" font-weight="normal" fill="#111"  stroke="#111" stroke-width="0.18">L</text>
<line x1="24" y1="342.3" x2="415" y2="342.3" stroke="#9c9c9c" stroke-width="1" />
<text x="25.20 33.20 38.80 43.60 48.40 50.80 56.40 58.80 61.20 66.00 71.60 74.00 76.40 78.80 81.20 86.80 89.20 94.00 99.60 105.20 107.60 110.80 116.40 118.80 121.20 126.00 131.60 134.00 139.60 147.60 153.20 155.60 158.80 165.20 170.00" y="352.8" font-size="9.60" font-weight="normal" fill="#111"  stroke="#111" stroke-width="0.18">Mass of soil in control volume (Xs)</text>
<text x="250.20 255.80 261.40 267.00 272.60 275.00" y="352.8" font-size="9.60" font-weight="normal" fill="#111"  stroke="#111" stroke-width="0.18">1800.0</text>
<text x="333.20 338.00" y="352.8" font-size="9.60" font-weight="normal" fill="#111"  stroke="#111" stroke-width="0.18">kg</text>
<line x1="24" y1="355.1" x2="415" y2="355.1" stroke="#9c9c9c" stroke-width="1" />
<text x="25.20 33.20 38.80 43.60 48.40 50.80 56.40 58.80 61.20 68.40 74.80 81.20 86.80 89.20 91.60 97.20 99.60 104.40 110.00 115.60 118.00 121.20 126.80 129.20 131.60 136.40 142.00 144.40 150.00 158.00 163.60 166.00 169.20 175.60 181.20 186.80 192.40 194.80" y="365.6" font-size="9.60" font-weight="normal" fill="#111"  stroke="#111" stroke-width="0.18">Mass of NAPL in control volume (Xnapl)</text>
<text x="250.20 255.80 261.40 263.80" y="365.6" font-size="9.60" font-weight="normal" fill="#111"  stroke="#111" stroke-width="0.18">70.0</text>
<text x="333.20 338.80 342.00 347.60 355.60" y="365.6" font-size="9.60" font-weight="normal" fill="#111"  stroke="#111" stroke-width="0.18">grams</text>
<line x1="24" y1="367.90000000000003" x2="415" y2="367.90000000000003" stroke="#9c9c9c" stroke-width="1" />
<text x="25.20 31.60 37.20 39.60 45.20 53.20 58.80 61.20 66.80 69.20 71.60 77.20 79.60 82.80 85.20 87.60 93.20 95.60 100.40 106.00 111.60 114.00 117.20 122.80 125.20 127.60 132.40 138.00 140.40 146.00 154.00 159.60 162.00 165.20 171.60 176.40" y="378.40000000000003" font-size="9.60" font-weight="normal" fill="#111"  stroke="#111" stroke-width="0.18">Volume of air in control volume (Vv)</text>
<text x="250.20 255.80 261.40 267.00 269.40" y="378.40000000000003" font-size="9.60" font-weight="normal" fill="#111"  stroke="#111" stroke-width="0.18">200.0</text>
<text x="333.20" y="378.40000000000003" font-size="9.60" font-weight="normal" fill="#111"  stroke="#111" stroke-width="0.18">L</text>
<line x1="24" y1="380.70000000000005" x2="415" y2="380.70000000000005" stroke="#9c9c9c" stroke-width="1" />
<line x1="248.5" y1="330" x2="248.5" y2="381.20000000000005" stroke="#9c9c9c" stroke-width="1" />
<line x1="331.5" y1="330" x2="331.5" y2="381.20000000000005" stroke="#9c9c9c" stroke-width="1" />
<line x1="414.5" y1="330" x2="414.5" y2="381.20000000000005" stroke="#9c9c9c" stroke-width="1" />
<rect x="23" y="403.5" width="394" height="107.5" fill="#fffbdd" />
<rect x="23" y="403.5" width="394" height="1" fill="#837a76" />
<rect x="23" y="403.5" width="1" height="107.5" fill="#837a76" />
<rect x="24" y="509.5" width="393" height="1.5" fill="#ffffff" />
<rect x="415" y="404.5" width="2" height="106.5" fill="#ffffff" />
<rect x="24" y="405" width="391" height="12" fill="#a4d6ff" />
<rect x="24" y="405" width="1" height="12" fill="#e4f2ff" />
<rect x="24" y="405" width="110" height="1" fill="#e4f2ff" />
<rect x="133" y="405" width="1" height="12" fill="#7c8792" />
<text x="54.20 61.40 67.00 71.80 76.60 79.80 82.20 87.80 90.20 92.60 98.20" y="415.1" font-size="9.60" font-weight="normal" fill="#0c1c30"  stroke="#0c1c30" stroke-width="0.18">Description</text>
<rect x="134" y="405" width="1" height="12" fill="#e4f2ff" />
<rect x="134" y="405" width="68.5" height="1" fill="#e4f2ff" />
<rect x="201.5" y="405" width="1" height="12" fill="#7c8792" />
<text x="148.65 155.05 160.65 166.25 171.05 176.65 182.25" y="415.1" font-size="9.60" font-weight="normal" fill="#0c1c30"  stroke="#0c1c30" stroke-width="0.18">Benzene</text>
<rect x="202.5" y="405" width="1" height="12" fill="#e4f2ff" />
<rect x="202.5" y="405" width="64.5" height="1" fill="#e4f2ff" />
<rect x="266" y="405" width="1" height="12" fill="#7c8792" />
<text x="207.55 213.95 216.35 221.95 227.55 234.75 237.15 242.75 248.35 256.35" y="415.1" font-size="9.60" font-weight="normal" fill="#0c1c30"  stroke="#0c1c30" stroke-width="0.18">A new name</text>
<rect x="267" y="405" width="1" height="12" fill="#e4f2ff" />
<rect x="267" y="405" width="87" height="1" fill="#e4f2ff" />
<rect x="353" y="405" width="1" height="12" fill="#7c8792" />
<text x="280.50 286.90 289.30 294.90 299.70 302.10 307.70 313.30 318.90 323.70 329.30 334.90" y="415.1" font-size="9.60" font-weight="normal" fill="#0c1c30"  stroke="#0c1c30" stroke-width="0.18">Ethylbenzene</text>
<rect x="354" y="405" width="1" height="12" fill="#e4f2ff" />
<rect x="354" y="405" width="61" height="1" fill="#e4f2ff" />
<rect x="414" y="405" width="1" height="12" fill="#7c8792" />
<text x="373.30 380.50 386.10 388.50 390.90" y="415.1" font-size="9.60" font-weight="normal" fill="#0c1c30"  stroke="#0c1c30" stroke-width="0.18">Units</text>
<rect x="24" y="416" width="391" height="1" fill="#7c8792" />
<rect x="24" y="417" width="391" height="38.400000000000006" fill="#ffffff" />
<text x="25.20 31.60 37.20" y="427.0" font-size="9.60" font-weight="normal" fill="#111"  stroke="#111" stroke-width="0.18">Koc</text>
<text x="135.20 140.80 146.40 148.80" y="427.0" font-size="9.60" font-weight="normal" fill="#111"  stroke="#111" stroke-width="0.18">53.4</text>
<text x="203.70 209.30 214.90 220.50 222.90" y="427.0" font-size="9.60" font-weight="normal" fill="#111"  stroke="#111" stroke-width="0.18">104.4</text>
<text x="268.20 273.80 279.40 285.00 287.40" y="427.0" font-size="9.60" font-weight="normal" fill="#111"  stroke="#111" stroke-width="0.18">181.1</text>
<text x="355.20 360.80 363.20 368.00" y="427.0" font-size="9.60" font-weight="normal" fill="#111"  stroke="#111" stroke-width="0.18">L/kg</text>
<line x1="24" y1="429.3" x2="415" y2="429.3" stroke="#9c9c9c" stroke-width="1" />
<text x="25.20 31.60" y="439.8" font-size="9.60" font-weight="normal" fill="#111"  stroke="#111" stroke-width="0.18">Kd</text>
<text x="135.20 140.80 143.20 148.80" y="439.8" font-size="9.60" font-weight="normal" fill="#111"  stroke="#111" stroke-width="0.18">1.07</text>
<text x="203.70 209.30 211.70 217.30" y="439.8" font-size="9.60" font-weight="normal" fill="#111"  stroke="#111" stroke-width="0.18">2.09</text>
<text x="268.20 273.80 276.20 281.80" y="439.8" font-size="9.60" font-weight="normal" fill="#111"  stroke="#111" stroke-width="0.18">3.62</text>
<text x="355.20 360.80 363.20 368.00" y="439.8" font-size="9.60" font-weight="normal" fill="#111"  stroke="#111" stroke-width="0.18">L/kg</text>
<line x1="24" y1="442.1" x2="415" y2="442.1" stroke="#9c9c9c" stroke-width="1" />
<text x="25.20 30.80 36.40 38.80 44.40 46.80 49.20 57.20 62.80 67.60 72.40 74.80 80.40 86.00 91.60 97.20" y="452.6" font-size="9.60" font-weight="normal" fill="#111"  stroke="#111" stroke-width="0.18">Total mass added</text>
<text x="135.20 140.80 143.20 148.80" y="452.6" font-size="9.60" font-weight="normal" fill="#111"  stroke="#111" stroke-width="0.18">1.09</text>
<text x="203.70 209.30 211.70 217.30" y="452.6" font-size="9.60" font-weight="normal" fill="#111"  stroke="#111" stroke-width="0.18">1.29</text>
<text x="268.20 273.80 276.20 281.80" y="452.6" font-size="9.60" font-weight="normal" fill="#111"  stroke="#111" stroke-width="0.18">1.49</text>
<text x="355.20 360.80 364.00 369.60 377.60" y="452.6" font-size="9.60" font-weight="normal" fill="#111"  stroke="#111" stroke-width="0.18">grams</text>
<line x1="24" y1="454.90000000000003" x2="415" y2="454.90000000000003" stroke="#9c9c9c" stroke-width="1" />
<line x1="133.5" y1="417" x2="133.5" y2="455.40000000000003" stroke="#9c9c9c" stroke-width="1" />
<line x1="202.0" y1="417" x2="202.0" y2="455.40000000000003" stroke="#9c9c9c" stroke-width="1" />
<line x1="266.5" y1="417" x2="266.5" y2="455.40000000000003" stroke="#9c9c9c" stroke-width="1" />
<line x1="353.5" y1="417" x2="353.5" y2="455.40000000000003" stroke="#9c9c9c" stroke-width="1" />
<line x1="414.5" y1="417" x2="414.5" y2="455.40000000000003" stroke="#9c9c9c" stroke-width="1" />
<rect x="445" y="91" width="328" height="416" fill="#ffffff" />
<rect x="445" y="91" width="327" height="1.5" fill="#bcd8f2" />
<rect x="445" y="91" width="1.5" height="415.5" fill="#bcd8f2" />
<g clip-path="url(#clip1)">
<rect x="447" y="93" width="319" height="334" fill="url(#chg)" />
<line x1="447" y1="93.5" x2="766" y2="93.5" stroke="#5f5f5f" stroke-width="1" />
<line x1="447.5" y1="93" x2="447.5" y2="428" stroke="#5f5f5f" stroke-width="1" />
<text x="606.8" y="115.3" font-size="15" font-weight="bold" fill="#000" text-anchor="middle" >Benzene</text>
<rect x="453.5" y="121.5" width="306" height="282" fill="#ffffff" stroke="#8c8c8c" stroke-width="1"/>
<path d="M607,262.5 L700.51,200.96 A111.5,113 0 1 0 715.90,286.77 Z" fill="#0000ff" stroke="#7a7a8a" stroke-width="0.6" stroke-linejoin="round"/>
<path d="M607,262.5 L718.50,262.50 A111.5,113 0 0 0 700.51,200.96 Z" fill="#ff0000" stroke="#7a7a8a" stroke-width="0.6" stroke-linejoin="round"/>
<path d="M607,262.5 L715.90,286.77 A111.5,113 0 0 0 717.78,275.29 Z" fill="#00ff00" stroke="#7a7a8a" stroke-width="0.6" stroke-linejoin="round"/>
<path d="M607,262.5 L717.78,275.29 A111.5,113 0 0 0 718.50,262.50 Z" fill="#ffff00" stroke="#7a7a8a" stroke-width="0.6" stroke-linejoin="round"/>
<text x="725.8" y="227.8" font-size="8.2" font-weight="normal" fill="#000" text-anchor="start" letter-spacing="0.25" stroke="#000" stroke-width="0.15">Water</text>
<text x="731.3" y="279.3" font-size="8.2" font-weight="normal" fill="#000" text-anchor="start" letter-spacing="0.25" stroke="#000" stroke-width="0.15">Air</text>
<text x="729" y="292.2" font-size="8.2" font-weight="normal" fill="#000" text-anchor="start" letter-spacing="0.25" stroke="#000" stroke-width="0.15">NAPL</text>
<rect x="448" y="403.5" width="318" height="23" fill="#9fcfe9" />
<rect x="534.5" y="410" width="143.5" height="14" fill="#ffffff" stroke="#9a9a9a" stroke-width="1"/>
<rect x="537.5" y="413.5" width="7.2" height="7.2" fill="#ff0000" />
<text x="547.3" y="420.3" font-size="8.2" font-weight="normal" fill="#000" text-anchor="start" letter-spacing="0.25" stroke="#000" stroke-width="0.15">Water</text>
<rect x="578" y="413.5" width="7.2" height="7.2" fill="#0000ff" />
<text x="588.2" y="420.3" font-size="8.2" font-weight="normal" fill="#000" text-anchor="start" letter-spacing="0.25" stroke="#000" stroke-width="0.15">Soil</text>
<rect x="612.3" y="413.5" width="7.2" height="7.2" fill="#00ff00" />
<text x="622.3" y="420.3" font-size="8.2" font-weight="normal" fill="#000" text-anchor="start" letter-spacing="0.25" stroke="#000" stroke-width="0.15">NAPL</text>
<rect x="652.2" y="413.5" width="7.2" height="7.2" fill="#ffff00" />
<text x="662.3" y="420.3" font-size="8.2" font-weight="normal" fill="#000" text-anchor="start" letter-spacing="0.25" stroke="#000" stroke-width="0.15">Air</text>
<rect x="447" y="426" width="319" height="1" fill="#f6f0f0" />
</g>
<rect x="447" y="427.5" width="312" height="1" fill="#666a70" />
<rect x="447" y="428.5" width="312" height="1.8" fill="#b8d8f2" />
<rect x="447" y="430.3" width="312" height="1.2" fill="#ffffff" />
<g clip-path="url(#clip2)">
<rect x="447" y="431.5" width="319" height="334" fill="url(#chg)" />
<line x1="447" y1="432.0" x2="766" y2="432.0" stroke="#5f5f5f" stroke-width="1" />
<line x1="447.5" y1="431.5" x2="447.5" y2="766.5" stroke="#5f5f5f" stroke-width="1" />
<text x="606.8" y="453.8" font-size="15" font-weight="bold" fill="#000" text-anchor="middle" >A new name</text>
<rect x="453.5" y="460.0" width="306" height="282" fill="#ffffff" stroke="#8c8c8c" stroke-width="1"/>
<path d="M607,601.0 L700.51,539.46 A111.5,113 0 1 0 715.90,625.27 Z" fill="#0000ff" stroke="#7a7a8a" stroke-width="0.6" stroke-linejoin="round"/>
<path d="M607,601.0 L718.50,601.00 A111.5,113 0 0 0 700.51,539.46 Z" fill="#ff0000" stroke="#7a7a8a" stroke-width="0.6" stroke-linejoin="round"/>
<path d="M607,601.0 L715.90,625.27 A111.5,113 0 0 0 717.78,613.79 Z" fill="#00ff00" stroke="#7a7a8a" stroke-width="0.6" stroke-linejoin="round"/>
<path d="M607,601.0 L717.78,613.79 A111.5,113 0 0 0 718.50,601.00 Z" fill="#ffff00" stroke="#7a7a8a" stroke-width="0.6" stroke-linejoin="round"/>
<text x="725.8" y="566.3" font-size="8.2" font-weight="normal" fill="#000" text-anchor="start" letter-spacing="0.25" stroke="#000" stroke-width="0.15">Water</text>
<text x="731.3" y="617.8" font-size="8.2" font-weight="normal" fill="#000" text-anchor="start" letter-spacing="0.25" stroke="#000" stroke-width="0.15">Air</text>
<text x="729" y="630.7" font-size="8.2" font-weight="normal" fill="#000" text-anchor="start" letter-spacing="0.25" stroke="#000" stroke-width="0.15">NAPL</text>
<rect x="448" y="742.0" width="318" height="23" fill="#9fcfe9" />
<rect x="534.5" y="748.5" width="143.5" height="14" fill="#ffffff" stroke="#9a9a9a" stroke-width="1"/>
<rect x="537.5" y="752.0" width="7.2" height="7.2" fill="#ff0000" />
<text x="547.3" y="758.8" font-size="8.2" font-weight="normal" fill="#000" text-anchor="start" letter-spacing="0.25" stroke="#000" stroke-width="0.15">Water</text>
<rect x="578" y="752.0" width="7.2" height="7.2" fill="#0000ff" />
<text x="588.2" y="758.8" font-size="8.2" font-weight="normal" fill="#000" text-anchor="start" letter-spacing="0.25" stroke="#000" stroke-width="0.15">Soil</text>
<rect x="612.3" y="752.0" width="7.2" height="7.2" fill="#00ff00" />
<text x="622.3" y="758.8" font-size="8.2" font-weight="normal" fill="#000" text-anchor="start" letter-spacing="0.25" stroke="#000" stroke-width="0.15">NAPL</text>
<rect x="652.2" y="752.0" width="7.2" height="7.2" fill="#ffff00" />
<text x="662.3" y="758.8" font-size="8.2" font-weight="normal" fill="#000" text-anchor="start" letter-spacing="0.25" stroke="#000" stroke-width="0.15">Air</text>
<rect x="447" y="764.5" width="319" height="1" fill="#f6f0f0" />
</g>
<rect x="759" y="94" width="13" height="399" fill="#cbcbcb" />
<line x1="759.5" y1="94" x2="759.5" y2="493" stroke="#8a8a8a" stroke-width="1" />
<line x1="771.5" y1="92" x2="771.5" y2="493" stroke="#7f7f7f" stroke-width="1" />
<rect x="759" y="92" width="13" height="11.5" fill="#d2d2d2" />
<rect x="759.5" y="92.5" width="12.5" height="11" fill="none" stroke="#7d7d7d" stroke-width="1"/>
<polygon points="762.3,99.6 769.3,99.6 765.8,95.8" fill="#000"/>
<rect x="759.5" y="103.5" width="12" height="148" fill="#a0a0e0" />
<rect x="761.5" y="105.5" width="8" height="144" fill="url(#hatch)" />
<rect x="759.5" y="103.5" width="12" height="148" fill="none" stroke="#7c7cc0" stroke-width="1"/>
<rect x="759" y="479.5" width="13" height="12" fill="#d2d2d2" />
<rect x="759.5" y="479.5" width="12.5" height="12" fill="none" stroke="#7d7d7d" stroke-width="1"/>
<polygon points="762.3,483.8 769.3,483.8 765.8,487.6" fill="#000"/>
<rect x="448" y="493" width="311" height="13" fill="#cbcbcb" />
<rect x="447" y="493.5" width="10.5" height="12" fill="#d2d2d2" />
<rect x="447.5" y="493.5" width="10" height="12" fill="none" stroke="#7d7d7d" stroke-width="1"/>
<polygon points="454.3,496.2 454.3,503.2 450.5,499.7" fill="#000"/>
<rect x="457.5" y="493.5" width="280" height="12" fill="#a0a0e0" />
<rect x="459.5" y="495.5" width="276" height="8" fill="url(#hatch)" />
<rect x="457.5" y="493.5" width="280" height="12" fill="none" stroke="#7c7cc0" stroke-width="1"/>
<rect x="745" y="493.5" width="13" height="12" fill="#d2d2d2" />
<rect x="745.5" y="493.5" width="12.5" height="12" fill="none" stroke="#7d7d7d" stroke-width="1"/>
<polygon points="749.6,496.2 749.6,503.2 753.4,499.7" fill="#000"/>
<rect x="759" y="493" width="12.5" height="12.5" fill="#fbfbfb" />
<rect x="284" y="208.5" width="233" height="114.5" fill="#d5d3cc" />
<rect x="285" y="209.5" width="231" height="1" fill="#ffffff" />
<rect x="285" y="209.5" width="1" height="112.5" fill="#ffffff" />
<rect x="516" y="208.5" width="1" height="114.5" fill="#404040" />
<rect x="284" y="322" width="233" height="1" fill="#404040" />
<rect x="515" y="209.5" width="1" height="112.5" fill="#808080" />
<rect x="285" y="321" width="231" height="1" fill="#808080" />
<rect x="286" y="211.3" width="228" height="18.7" fill="url(#tg)" />
<text x="287.4" y="224.6" font-size="12.3" font-weight="normal" fill="#ffffff" text-anchor="start" >Select an Option</text>
<rect x="496" y="212.5" width="16.5" height="14.5" fill="#d4d0c8" />
<rect x="496" y="212.5" width="16.5" height="1" fill="#ffffff" />
<rect x="496" y="212.5" width="1" height="14.5" fill="#ffffff" />
<rect x="511.5" y="212.5" width="1" height="14.5" fill="#404040" />
<rect x="496" y="226" width="16.5" height="1" fill="#404040" />
<rect x="510.5" y="213.5" width="1" height="12.5" fill="#808080" />
<rect x="497" y="225" width="14.5" height="1" fill="#808080" />
<path d="M500.2,215.8 L507.8,223.2 M507.8,215.8 L500.2,223.2" stroke="#000" stroke-width="1.7" fill="none"/>
<rect x="286" y="230" width="228.5" height="74" fill="#cfcfcf" />
<rect x="296" y="239" width="22.5" height="25.5" rx="1.5" fill="url(#ig)"/>
<rect x="296.5" y="239.5" width="21.5" height="24.5" rx="1.5" fill="none" stroke="#a9cfa9" stroke-width="1"/>
<g transform="translate(307.1,260.9) scale(0.78,1)">
<text x="0" y="0" font-size="27" font-weight="bold" fill="#a8d8a8" text-anchor="middle" stroke="#2c5a36" stroke-width="1.0">?</text>
</g>
<text x="331.60 338.80 344.40 347.60 353.20 355.60 361.20 363.60 369.20 374.80 378.80 382.80 388.40 394.00 397.20 399.60 405.20 410.80 416.40 422.00 425.20 427.60 430.80 436.40 442.00 447.60 450.80 453.20 458.80 462.80 468.40 474.00 479.60 483.60 486.80 489.20 494.80 500.40" y="255.8" font-size="9.60" font-weight="bold" fill="#000"  stroke="#000" stroke-width="0.3">Retain current constituent properties?</text>
<rect x="363.5" y="272.2" width="33.5" height="19.80000000000001" fill="#cfcfcf" />
<rect x="364.0" y="272.7" width="32.5" height="18.80000000000001" fill="none" stroke="#6f6f6f" stroke-width="1"/>
<rect x="365.0" y="273.7" width="31.5" height="17.80000000000001" fill="none" stroke="#f4f4f4" stroke-width="1"/>
<rect x="364.0" y="272.7" width="32.5" height="18.80000000000001" fill="none" stroke="#606060" stroke-width="1.6"/>
<rect x="371.5" y="275.2" width="18.0" height="13.600000000000012" fill="#d0d0e4" stroke="#a9a9d6" stroke-width="1"/>
<text x="371.25 377.65 383.25" y="285.8" font-size="9.60" font-weight="bold" fill="#000"  stroke="#000" stroke-width="0.3"><tspan text-decoration="underline">Y</tspan>es</text>
<rect x="403.4" y="272.2" width="33.60000000000002" height="19.80000000000001" fill="#cfcfcf" />
<rect x="403.9" y="272.7" width="32.60000000000002" height="18.80000000000001" fill="none" stroke="#6f6f6f" stroke-width="1"/>
<rect x="404.9" y="273.7" width="31.600000000000023" height="17.80000000000001" fill="none" stroke="#f4f4f4" stroke-width="1"/>
<text x="413.60 420.80" y="285.8" font-size="9.60" font-weight="bold" fill="#000"  stroke="#000" stroke-width="0.3"><tspan text-decoration="underline">N</tspan>o</text>
<text x="288" y="318.9" font-size="11" font-weight="normal" fill="#202020" text-anchor="start" >Java Applet Window</text>
</svg>
</body>
</html>
